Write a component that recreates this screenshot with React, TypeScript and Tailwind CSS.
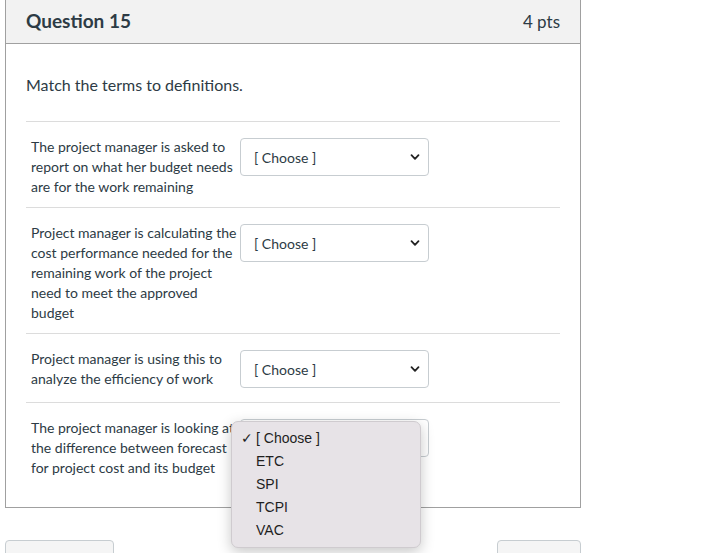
import React from 'react';

const rows = [
  'The project manager is asked to report on what her budget needs are for the work remaining',
  'Project manager is calculating the cost performance needed for the remaining work of the project need to meet the approved budget',
  'Project manager is using this to analyze the efficiency of work',
  'The project manager is looking at the difference between forecast for project cost and its budget',
];

const options = ['[ Choose ]', 'ETC', 'SPI', 'TCPI', 'VAC'];

function Chevron() {
  return (
    <svg width="10" height="10" viewBox="0 0 10 10" className="shrink-0">
      <path d="M1.5 3.2 L5 6.8 L8.5 3.2" fill="none" stroke="#222" strokeWidth="1.8" strokeLinecap="round" strokeLinejoin="round" />
    </svg>
  );
}

function FakeSelect() {
  return (
    <div className="mt-[1px] mb-[4px] flex h-[38px] w-[189px] shrink-0 items-center justify-between rounded-[4px] border border-[#c7cdd1] bg-white pl-[13px] pr-[8px] text-[14px] text-[#2d3b45]">
      <span>[ Choose ]</span>
      <Chevron />
    </div>
  );
}

function Dropdown() {
  return (
    <div className="absolute left-[-9px] top-[3px] z-10 w-[190px] rounded-[7px] border border-[#cfcbcf] bg-[#e7e3e7] py-[5px] shadow-[0_4px_14px_rgba(0,0,0,0.22)] [font-family:'Liberation_Sans',Arial,sans-serif]">
      {options.map((o, i) => (
        <div key={o} className="relative h-[23px] pl-[24px] text-[14px] leading-[23px] text-[#1e1e1e]">
          {i === 0 && <span className="absolute left-[9px] top-0 text-[14px]">✓</span>}
          {o}
        </div>
      ))}
    </div>
  );
}

export default function App() {
  return (
    <div className="min-h-[553px] overflow-hidden bg-white [font-family:Lato,'Noto_Sans',sans-serif]">
      <div className="ml-[5px] w-[576px] border-x border-b border-[#a0a0a0]">
        <div className="flex h-[44px] items-center justify-between border-b border-[#a0a0a0] bg-[#f2f2f2] px-[20px] text-[#2d3b45]">
          <h2 className="text-[19px] font-bold">Question 15</h2>
          <span className="text-[17px]">4 pts</span>
        </div>

        <div className="px-[20px] pb-[19px] text-[#2d3b45]">
          <p className="pt-[31px] pb-[26px] text-[16px] leading-[20px]">Match the terms to definitions.</p>

          {rows.map((r, i) => (
            <div key={i} className="flex border-t border-[#dcdcdc] pl-[5px] pt-[15px] pb-[10px]">
              <div className="w-[209px] text-[14px] leading-[20px]">{r}</div>
              <div className="relative">
                <FakeSelect />
                {i === 3 && <Dropdown />}
              </div>
            </div>
          ))}
        </div>
      </div>

      <div className="mt-[32px] flex w-[581px] justify-between pl-[5px]">
        <div className="h-[30px] w-[109px] rounded-t-[4px] border border-[#c7cdd1] bg-[#f5f5f5]" />
        <div className="h-[30px] w-[84px] rounded-t-[4px] border border-[#c7cdd1] bg-[#f5f5f5]" />
      </div>
    </div>
  );
}
